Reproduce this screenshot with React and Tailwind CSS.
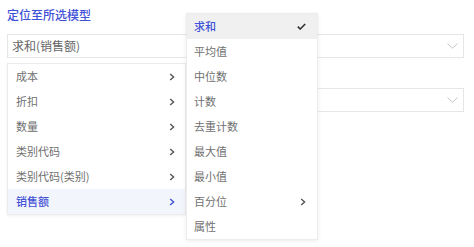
import React from 'react';

const fields = ['成本', '折扣', '数量', '类别代码', '类别代码(类别)', '销售额'];
const aggs = ['求和', '平均值', '中位数', '计数', '去重计数', '最大值', '最小值', '百分位', '属性'];

const Chevron = ({ className }) => (
  <svg width="6" height="8" viewBox="0 0 6 8" className={className}>
    <path d="M1.2 1 L4.6 4 L1.2 7" fill="none" stroke="currentColor" strokeWidth="1.4" />
  </svg>
);

const Caret = () => (
  <svg width="11" height="6" viewBox="0 0 11 6" className="text-[#c4c4c4]">
    <path d="M0.5 0.5 L5.5 5.2 L10.5 0.5" fill="none" stroke="currentColor" strokeWidth="1" />
  </svg>
);

const Check = () => (
  <svg width="9" height="7" viewBox="0 0 9 7" className="text-[#333]">
    <path d="M0.8 3.6 L3.2 6 L8.2 1" fill="none" stroke="currentColor" strokeWidth="1.6" />
  </svg>
);

export default function App() {
  return (
    <div className="relative h-[247px] w-[474px] overflow-hidden bg-white font-['Noto_Sans_CJK_SC','Noto_Sans',sans-serif]">
      <div className="pl-[7px] pr-[10px] pt-[6px]">
        <div className="text-[12px] leading-[18px] font-medium text-[#3f51d6]">定位至所选模型</div>
        <div className="mt-[10px] flex h-[24px] items-center justify-between border border-[#e6e6e6] pl-[4px] pr-[5px]">
          <span className="text-[12px] text-[#666]">求和(销售额)</span>
          <Caret />
        </div>
        <div className="mt-[30px] flex h-[24px] items-center justify-end border border-[#e6e6e6] pr-[5px]">
          <Caret />
        </div>
      </div>

      {/* field menu */}
      <div className="absolute left-[7px] top-[63px] w-[179px] border border-[#ececec] bg-white shadow-[0_1px_3px_rgba(0,0,0,0.06)]">
        {fields.map((f) => {
          const active = f === '销售额';
          return (
            <div
              key={f}
              className={`flex h-[25px] items-center justify-between pl-[8px] pr-[10px] text-[11px] ${active ? 'bg-[#f3f5fc] font-medium text-[#3f51d6]' : 'text-[#707070]'}`}
            >
              <span>{f}</span>
              <Chevron className={active ? 'text-[#3f51d6]' : 'text-[#555]'} />
            </div>
          );
        })}
      </div>

      {/* aggregation menu */}
      <div className="absolute left-[186px] top-[13px] w-[132px] border border-[#ececec] bg-white shadow-[0_1px_4px_rgba(0,0,0,0.08)]">
        {aggs.map((a) => {
          const active = a === '求和';
          return (
            <div
              key={a}
              className={`flex h-[25px] items-center justify-between pl-[7px] pr-[11px] text-[11px] ${active ? 'bg-[#f0f0f0] font-medium text-[#3f51d6]' : 'text-[#707070]'}`}
            >
              <span>{a}</span>
              {active && <Check />}
              {a === '百分位' && <Chevron className="text-[#555]" />}
            </div>
          );
        })}
      </div>
    </div>
  );
}
